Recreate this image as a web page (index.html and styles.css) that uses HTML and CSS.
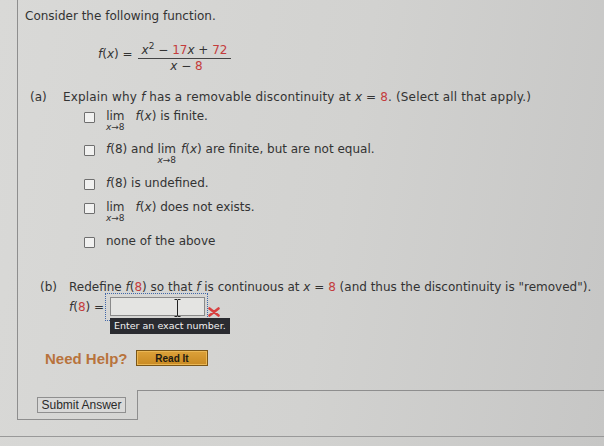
FILE: index.html
```html
<!DOCTYPE html>
<html>
<head>
<meta charset="utf-8">
<title>Removable discontinuity</title>
<link rel="stylesheet" href="styles.css">
</head>
<body>
<div class="frame">
  <p class="intro">Consider the following function.</p>

  <div class="formula">
    <span class="fx"><i>f</i>(<i>x</i>) =</span>
    <span class="frac">
      <span class="num"><i>x</i><sup>2</sup> − <span class="red">17</span><i>x</i> + <span class="red">72</span></span>
      <span class="den"><i>x</i> − <span class="red">8</span></span>
    </span>
  </div>

  <div class="qline qa">
    <span class="lbl">(a)</span>
    <span class="qtext">Explain why <i>f</i> has a removable discontinuity at <i>x</i> = <span class="red">8</span>. (Select all that apply.)</span>
  </div>

  <ul class="opts">
    <li class="opt">
      <span class="cb"></span>
      <span class="lim"><span class="l">lim</span><span class="sub"><i>x</i>→8</span></span>
      <span class="t after"><i>f</i>(<i>x</i>) is finite.</span>
    </li>
    <li class="opt">
      <span class="cb"></span>
      <span class="t"><i>f</i>(8) and </span>
      <span class="lim"><span class="l">lim</span><span class="sub"><i>x</i>→8</span></span>
      <span class="t after2"><i>f</i>(<i>x</i>) are finite, but are not equal.</span>
    </li>
    <li class="opt plain">
      <span class="cb"></span>
      <span class="t"><i>f</i>(8) is undefined.</span>
    </li>
    <li class="opt">
      <span class="cb"></span>
      <span class="lim"><span class="l">lim</span><span class="sub"><i>x</i>→8</span></span>
      <span class="t after"><i>f</i>(<i>x</i>) does not exists.</span>
    </li>
    <li class="opt plain">
      <span class="cb"></span>
      <span class="t">none of the above</span>
    </li>
  </ul>

  <div class="qline qb">
    <span class="lbl">(b)</span>
    <span class="qtext">Redefine <i>f</i>(<span class="red">8</span>) so that <i>f</i> is continuous at <i>x</i> = <span class="red">8</span> (and thus the discontinuity is "removed").</span>
  </div>

  <div class="answer">
    <span class="alabel"><i>f</i>(<span class="red">8</span>) =</span>
    <span class="focus">
      <span class="input"></span>
      <svg class="ibeam" width="7" height="18" viewBox="0 0 7 18"><path d="M0.5 0.5h2.5l0.5 0.7 0.5-0.7h2.5M3.5 1.2v15.6M0.5 17.5h2.5l0.5-0.7 0.5 0.7h2.5" fill="none" stroke="#222" stroke-width="1"/></svg>
      <span class="tip">Enter an exact number.</span>
    </span>
    <svg class="xmark" width="12" height="10" viewBox="0 0 12 10"><path d="M1.5 1.5l9 7M10.5 1.5l-9 7" stroke="#d94040" stroke-width="2.6" stroke-linecap="round"/></svg>
  </div>

  <div class="help">
    <span class="needhelp">Need Help?</span>
    <button class="readit">Read It</button>
  </div>

  <div class="submitrow">
    <div class="submitcell"><button class="submit">Submit Answer</button></div>
    <div class="restcell"></div>
  </div>
</div>
<div class="bottomline"></div>
</body>
</html>
```

FILE: styles.css
```css
html, body {
  margin: 0;
  padding: 0;
}
body {
  width: 604px;
  height: 446px;
  overflow: hidden;
  background: linear-gradient(100deg, #d9d9d7 0%, #d2d2d0 55%, #c6c6c5 100%);
  color: #333;
  font-family: "DejaVu Sans", Verdana, sans-serif;
  font-size: 12px;
}
i { font-style: italic; }
.red { color: #c43c3c; }

.frame {
  margin-left: 17px;
  border-left: 1px solid #8e8e8e;
  padding-top: 9px;
  display: flex;
  flex-direction: column;
}

.intro {
  margin: 0;
  padding-left: 7px;
  line-height: 14px;
}

.formula {
  margin-top: 20px;
  margin-left: 80px;
  display: flex;
  align-items: center;
}
.fx {
  margin-bottom: 9px;
  margin-right: 5px;
  white-space: nowrap;
}
.frac {
  display: inline-flex;
  flex-direction: column;
  align-items: stretch;
  text-align: center;
}
.num {
  line-height: 14px;
  padding: 0 4px 1px;
  border-bottom: 1px solid #444;
  white-space: nowrap;
}
.num sup {
  font-size: 9px;
  line-height: 0;
  vertical-align: 5px;
}
.den {
  line-height: 14px;
  padding-left: 4px;
}

.qline {
  display: flex;
  line-height: 14px;
  white-space: nowrap;
}
.qa {
  margin-top: 17px;
  padding-left: 12px;
}
.qa .lbl { width: 33px; }
.qa .qtext { letter-spacing: 0.15px; }
.qb {
  margin-top: 32px;
  padding-left: 22px;
}
.qb .lbl { width: 29px; }

.opts {
  list-style: none;
  margin: 6px 0 0;
  padding: 0 0 0 66px;
  display: flex;
  flex-direction: column;
  gap: 11px;
}
.opt {
  display: flex;
  align-items: flex-start;
}
.cb {
  flex: none;
  width: 9px;
  height: 9px;
  margin-top: 2px;
  margin-right: 11px;
  border: 1px solid #6f6f6f;
  border-radius: 1px;
  background: #f1f1f0;
}
.plain .cb { margin-top: 3px; }
.lim {
  display: inline-flex;
  flex-direction: column;
  align-items: center;
}
.lim .l { line-height: 12px; }
.lim .sub {
  font-size: 9px;
  line-height: 10px;
  white-space: nowrap;
}
.t {
  line-height: 12px;
  white-space: pre;
}
.plain .t { line-height: 14px; }
.after { margin-left: 11px; }
.after2 { margin-left: 5px; }

.answer {
  margin-top: -1px;
  padding-left: 51px;
  display: flex;
  align-items: center;
}
.alabel {
  width: 36px;
  white-space: nowrap;
}
.focus {
  position: relative;
  display: block;
  border: 1px dotted #3f66a8;
  padding: 3px 2px 4px 4px;
}
.input {
  display: block;
  width: 93px;
  height: 17px;
  border: 1px solid #8a8a8a;
  background: #e4e4e2;
}
.ibeam {
  position: absolute;
  left: 68px;
  top: 5px;
}
.tip {
  position: absolute;
  left: 4px;
  top: 24px;
  padding: 0 4px;
  height: 16px;
  line-height: 16px;
  background: #2a2b30;
  color: #f2f2f2;
  font-size: 9.5px;
  white-space: nowrap;
  z-index: 2;
}
.xmark {
  align-self: flex-end;
  margin-left: 0;
  margin-bottom: 4px;
}

.help {
  margin-top: 29px;
  padding-left: 27px;
  display: flex;
  align-items: center;
  height: 16px;
}
.needhelp {
  font-family: "Liberation Sans", Arial, sans-serif;
  font-weight: bold;
  font-size: 15px;
  color: #b8733c;
  width: 91px;
}
.readit {
  width: 72px;
  height: 16px;
  padding: 0;
  border: 1px solid #7a5618;
  box-shadow: inset 0 0 0 1px #eab755;
  background: linear-gradient(#dca13a, #c98a22);
  font-family: "Liberation Sans", Arial, sans-serif;
  font-weight: bold;
  font-size: 10px;
  color: #1e1a12;
}

.submitrow {
  margin-top: 24px;
  display: flex;
}
.submitcell {
  width: 100px;
  height: 22px;
  padding: 7px 0 0 19px;
  border-right: 1px solid #8e8e8e;
  border-bottom: 1px solid #8e8e8e;
}
.submit {
  display: block;
  width: 89px;
  height: 16px;
  padding: 0;
  border: 1px solid #8f8f8f;
  background: #d9d9d8;
  font-family: "Liberation Sans", Arial, sans-serif;
  font-size: 12px;
  color: #2a2a2a;
}
.restcell {
  flex: 1;
  border-top: 1px solid #8e8e8e;
}

.bottomline {
  margin-top: 16px;
  border-top: 1px solid #999;
}
```
